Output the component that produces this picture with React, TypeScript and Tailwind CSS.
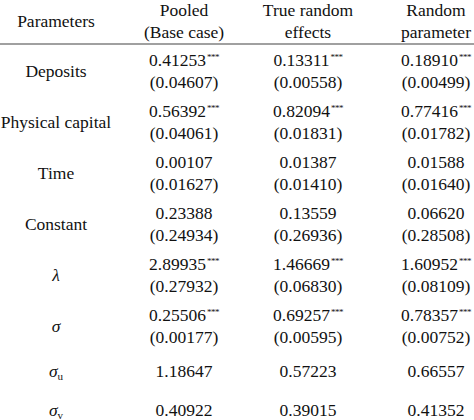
import { FC, ReactNode } from 'react';

type Cell = [string, string | null, boolean];

interface Row {
  label: ReactNode;
  values: Cell[];
  height: string;
}

const Stars: FC = () => (
  <span className="relative -top-[6px] ml-[1px] text-[9px] leading-none tracking-[-0.5px]">***</span>
);

const Sigma: FC<{ sub: string }> = ({ sub }) => (
  <span>
    <i>σ</i>
    <sub className="text-[11px]">{sub}</sub>
  </span>
);

const rows: Row[] = [
  {
    label: 'Deposits',
    height: 'h-[51px]',
    values: [
      ['0.41253', '(0.04607)', true],
      ['0.13311', '(0.00558)', true],
      ['0.18910', '(0.00499)', true],
    ],
  },
  {
    label: 'Physical capital',
    height: 'h-[51px]',
    values: [
      ['0.56392', '(0.04061)', true],
      ['0.82094', '(0.01831)', true],
      ['0.77416', '(0.01782)', true],
    ],
  },
  {
    label: 'Time',
    height: 'h-[51px]',
    values: [
      ['0.00107', '(0.01627)', false],
      ['0.01387', '(0.01410)', false],
      ['0.01588', '(0.01640)', false],
    ],
  },
  {
    label: 'Constant',
    height: 'h-[51px]',
    values: [
      ['0.23388', '(0.24934)', false],
      ['0.13559', '(0.26936)', false],
      ['0.06620', '(0.28508)', false],
    ],
  },
  {
    label: <i>λ</i>,
    height: 'h-[51px]',
    values: [
      ['2.89935', '(0.27932)', true],
      ['1.46669', '(0.06830)', true],
      ['1.60952', '(0.08109)', true],
    ],
  },
  {
    label: <i>σ</i>,
    height: 'h-[51px]',
    values: [
      ['0.25506', '(0.00177)', true],
      ['0.69257', '(0.00595)', true],
      ['0.78357', '(0.00752)', true],
    ],
  },
  {
    label: <Sigma sub="u" />,
    height: 'h-[40px]',
    values: [
      ['1.18647', null, false],
      ['0.57223', null, false],
      ['0.66557', null, false],
    ],
  },
  {
    label: <Sigma sub="v" />,
    height: 'h-[38px]',
    values: [
      ['0.40922', null, false],
      ['0.39015', null, false],
      ['0.41352', null, false],
    ],
  },
];

const grid = 'grid grid-cols-[112px_144px_104px_152px] w-[512px]';

const App: FC = () => {
  return (
    <div className="w-[474px] h-[420px] overflow-hidden bg-white text-[#111] text-[17.5px] font-['Liberation_Serif']">
      <div className={`${grid} h-[43px] leading-[21.5px] text-center`}>
        <div className="flex items-center justify-center">Parameters</div>
        <div>
          Pooled
          <br />
          (Base case)
        </div>
        <div>
          True random
          <br />
          effects
        </div>
        <div>
          Random
          <br />
          parameter
        </div>
      </div>
      <div className="h-[2px] w-full bg-[#a0a0a0]" />

      {rows.map((row, i) => (
        <div key={i} className={`${grid} ${row.height} text-center leading-[22px]`}>
          <div className="flex items-center justify-center whitespace-nowrap">{row.label}</div>
          {row.values.map(([v, se, sig], j) => (
            <div key={j} className="flex flex-col items-center justify-center">
              <div className="whitespace-nowrap">
                {v}
                {sig && <Stars />}
              </div>
              {se && <div>{se}</div>}
            </div>
          ))}
        </div>
      ))}
    </div>
  );
};

export default App;
